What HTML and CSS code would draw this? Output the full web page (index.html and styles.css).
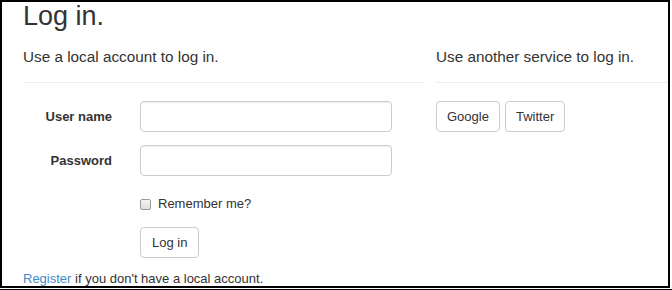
FILE: index.html
```html
<!DOCTYPE html>
<html lang="en">
<head>
<meta charset="utf-8">
<title>Log in</title>
<link rel="stylesheet" href="styles.css">
</head>
<body>
<div class="frame">
  <h2 class="title">Log in.</h2>
  <div class="columns">
    <section class="col-local">
      <h4 class="section-title">Use a local account to log in.</h4>
      <hr class="rule">
      <form class="login-form">
        <div class="form-row">
          <label class="field-label" for="user">User name</label>
          <input class="text-input" id="user" type="text">
        </div>
        <div class="form-row">
          <label class="field-label" for="pass">Password</label>
          <input class="text-input" id="pass" type="password">
        </div>
        <div class="check-row">
          <input class="check" id="remember" type="checkbox">
          <label class="check-label" for="remember">Remember me?</label>
        </div>
        <div class="submit-row">
          <button class="btn" type="button">Log in</button>
        </div>
      </form>
      <p class="register"><a class="link" href="#">Register</a> if you don't have a local account.</p>
    </section>
    <section class="col-external">
      <h4 class="section-title">Use another service to log in.</h4>
      <hr class="rule">
      <div class="provider-row">
        <button class="btn" type="button">Google</button>
        <button class="btn" type="button">Twitter</button>
      </div>
    </section>
  </div>
</div>
<div class="bottom-line"></div>
</body>
</html>
```

FILE: styles.css
```css
html, body {
  margin: 0;
  padding: 0;
  background: #fff;
}

body {
  width: 672px;
  height: 290px;
  overflow: hidden;
  font-family: "Liberation Sans", Arial, sans-serif;
  font-size: 13px;
  color: #333;
}

.frame {
  box-sizing: border-box;
  width: 670px;
  height: 288px;
  border: 2px solid #000;
  padding-left: 21px;
  overflow: hidden;
}

.bottom-line {
  margin-top: 1px;
  height: 1px;
  width: 672px;
  background: #000;
}

.title {
  margin: -1px 0 0 0;
  font-size: 27px;
  line-height: 30px;
  height: 30px;
  font-weight: normal;
  color: #333;
}

.columns {
  display: flex;
}

.col-local {
  width: 402px;
  flex: none;
}

.col-external {
  margin-left: 11px;
  flex: 1;
  margin-right: -4px;
}

.section-title {
  margin: 17px 0 0 0;
  font-size: 15.3px;
  line-height: 17px;
  font-weight: normal;
  color: #333;
  white-space: nowrap;
}

.rule {
  margin: 17px 0 0 0;
  border: 0;
  border-top: 1px solid #eee;
  height: 0;
}

.login-form {
  margin: 18px 0 0 0;
}

.form-row {
  display: flex;
  align-items: center;
  gap: 28px;
  margin-bottom: 13px;
}

.field-label {
  width: 89px;
  text-align: right;
  font-weight: bold;
  font-size: 13px;
  color: #333;
}

.text-input {
  box-sizing: border-box;
  width: 252px;
  height: 31px;
  margin: 0;
  padding: 4px 10px;
  border: 1px solid #ccc;
  border-radius: 4px;
  background: #fff;
  box-shadow: inset 0 1px 1px rgba(0, 0, 0, 0.075);
  font-family: inherit;
  font-size: 13px;
  color: #555;
}

.check-row {
  display: flex;
  align-items: center;
  gap: 7px;
  margin-top: 18px;
  padding-left: 117px;
  height: 20px;
  line-height: 20px;
}

.check {
  -webkit-appearance: none;
  appearance: none;
  box-sizing: border-box;
  width: 11px;
  height: 11px;
  margin: 0;
  border: 1px solid #9a9a9a;
  border-radius: 2px;
  background: linear-gradient(#f4f4f4, #dedede);
}

.check-label {
  font-size: 13px;
  color: #333;
}

.submit-row {
  margin-top: 13px;
  padding-left: 117px;
  display: flex;
}

.btn {
  box-sizing: border-box;
  height: 31px;
  margin: 0;
  padding: 0 10px;
  border: 1px solid #ccc;
  border-radius: 4px;
  background: #fff;
  font-family: inherit;
  font-size: 13px;
  color: #333;
  line-height: 29px;
}

.submit-row .btn {
  padding: 0 11px;
}

.register {
  margin: 12px 0 0 0;
  line-height: 18px;
  font-size: 13px;
  white-space: nowrap;
}

.link {
  color: #428bca;
  text-decoration: none;
}

.provider-row {
  margin-top: 18px;
  display: flex;
  gap: 5px;
}
```
